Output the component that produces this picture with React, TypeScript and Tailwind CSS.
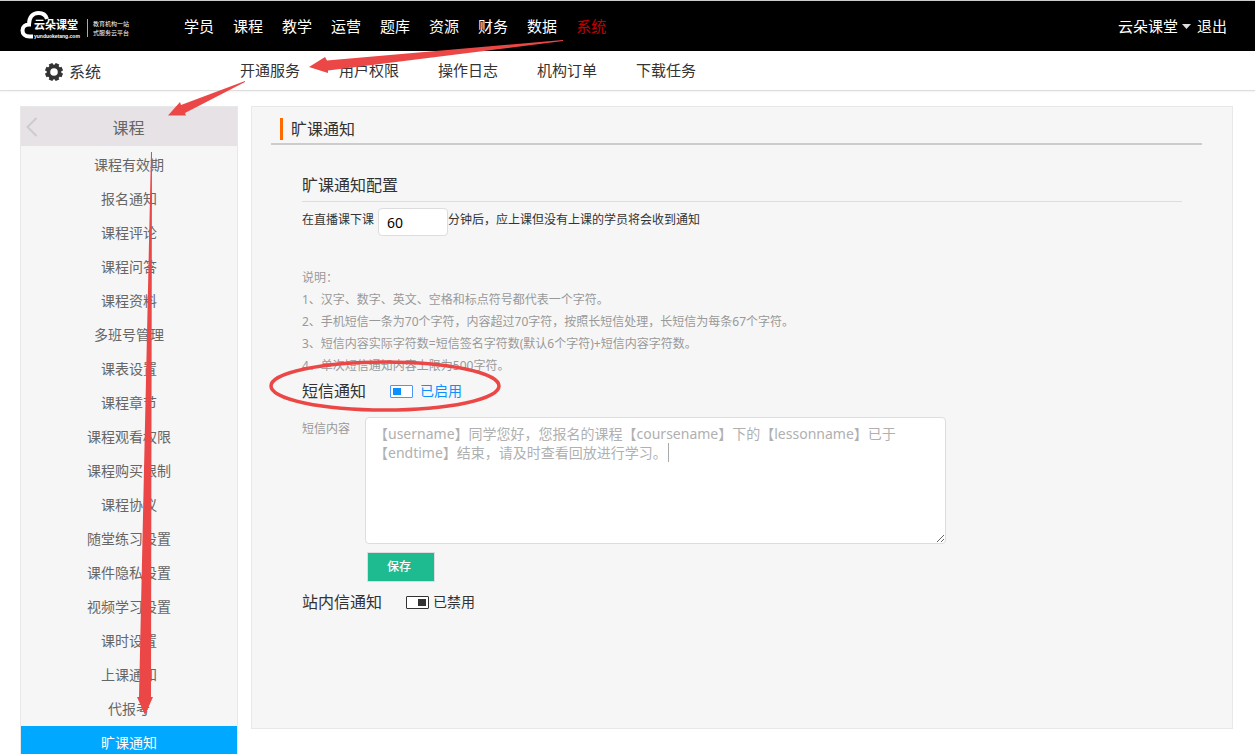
const mainNav = ['学员', '课程', '教学', '运营', '题库', '资源', '财务', '数据', '系统'];

const subNav = ['开通服务', '用户权限', '操作日志', '机构订单', '下载任务'];

const sideItems = [
  '课程有效期',
  '报名通知',
  '课程评论',
  '课程问答',
  '课程资料',
  '多班号管理',
  '课表设置',
  '课程章节',
  '课程观看权限',
  '课程购买限制',
  '课程协议',
  '随堂练习设置',
  '课件隐私设置',
  '视频学习设置',
  '课时设置',
  '上课通知',
  '代报考',
  '旷课通知',
];

const notes = [
  '说明：',
  '1、汉字、数字、英文、空格和标点符号都代表一个字符。',
  '2、手机短信一条为70个字符，内容超过70字符，按照长短信处理，长短信为每条67个字符。',
  '3、短信内容实际字符数=短信签名字符数(默认6个字符)+短信内容字符数。',
  '4、单次短信通知内容上限为500字符。',
];

function Logo() {
  return (
    <svg width="112" height="32" viewBox="0 0 112 32" className="text-white" role="img" aria-label="云朵课堂">
      <path
        d="M13 26.500H9.500C5 26.500 2.500 24 2.500 20.500c0-4 3-6 6.500-6C9 7 13 3 18.500 3c4.500 0 7.500 2.500 8.500 6"
        fill="none"
        stroke="currentColor"
        strokeWidth="4"
      />
      <text x="14" y="19" fontSize="11" fontWeight="700" fill="currentColor">云朵课堂</text>
      <text x="14" y="28" fontSize="5" fontWeight="700" fill="currentColor" className="font-['Liberation_Sans',sans-serif]">
        yunduoketang.com
      </text>
      <path d="M67.500 9v18" stroke="#aaa" />
      <text x="73" y="16" fontSize="6" fill="currentColor">教育机构一站</text>
      <text x="73" y="25" fontSize="6" fill="currentColor">式服务云平台</text>
    </svg>
  );
}

function GearIcon() {
  return (
    <svg width="18" height="18" viewBox="0 0 18 18" className="text-[#333]" aria-hidden="true">
      <circle cx="9" cy="9" r="5.600" fill="none" stroke="currentColor" strokeWidth="3.600" />
      <g stroke="currentColor" strokeWidth="4">
        <path d="M9 0v3M9 15v3M0 9h3M15 9h3" transform="rotate(22.500 9 9)" />
        <path d="M9 0v3M9 15v3M0 9h3M15 9h3" transform="rotate(67.500 9 9)" />
      </g>
    </svg>
  );
}

function TopBar() {
  return (
    <header className="flex h-[51px] items-center border-t border-[#ccc] bg-black pr-7 pl-5 text-[15px] text-white">
      <a href="#" className="mr-[52px] shrink-0">
        <Logo />
      </a>
      <nav className="flex gap-[19px]">
        {mainNav.map((name) => (
          <a key={name} href="#" className={name === '系统' ? 'text-[#c00000]' : ''}>
            {name}
          </a>
        ))}
      </nav>
      <div className="ml-auto flex items-center">
        <button type="button" className="flex items-center gap-1">
          云朵课堂
          <svg width="9" height="5" viewBox="0 0 9 5" fill="#ddd" aria-hidden="true">
            <path d="M0 0h9L4.500 5z" />
          </svg>
        </button>
        <a href="#" className="ml-1.5">退出</a>
      </div>
    </header>
  );
}

function SubBar() {
  return (
    <div className="flex h-10 items-center border-b border-[#ddd] bg-white pl-[45px] text-[15px] text-[#333] shadow-xs">
      <div className="flex w-[195px] items-center gap-1.5 pt-0.5 text-base">
        <GearIcon />
        系统
      </div>
      <nav className="flex gap-[39px]">
        {subNav.map((name) => (
          <a key={name} href="#">
            {name}
          </a>
        ))}
      </nav>
    </div>
  );
}

function Sidebar() {
  return (
    <aside className="w-[218px] shrink-0 border border-[#e8e8e8] bg-[#f6f6f6] text-center text-sm text-[#666]">
      <div className="flex h-[39px] items-center bg-[#e6e2e6] pr-[22px] pl-[5px]">
        <button type="button" aria-label="返回">
          <svg width="12" height="20" viewBox="0 0 12 20" fill="none" stroke="#ccc" strokeWidth="2">
            <path d="M10.500 1L1.500 10l9 9" />
          </svg>
        </button>
        <h2 className="flex-1 pt-0.5 pl-1 text-base">课程</h2>
      </div>
      <ul className="pt-0.5">
        {sideItems.map((item) => (
          <li key={item}>
            <a
              href="#"
              className={
                item === '旷课通知'
                  ? 'block h-[34px] bg-[#00a8ff] leading-[34px] text-white'
                  : 'block h-[34px] leading-[34px]'
              }
            >
              {item}
            </a>
          </li>
        ))}
      </ul>
    </aside>
  );
}

function NoticePanel() {
  return (
    <main className="min-h-[623px] flex-1 border border-[#e8e8e8] bg-[#f6f6f6] pr-[30px] pl-[19px] text-[#333]">
      <div className="flex h-[38px] items-end border-b-2 border-[#ccc] pb-[3px] pl-[9px]">
        <h1 className="border-l-3 border-[#ff6a00] pl-2 text-base leading-[22px]">旷课通知</h1>
      </div>

      <div className="pt-7 pr-5 pl-[31px]">
        <h2 className="h-[29px] border-b border-[#ddd] text-base leading-6">旷课通知配置</h2>
        <div className="flex items-start pt-1.5 text-xs leading-6">
          <label htmlFor="minutes" className="mr-1">在直播课下课</label>
          <input
            id="minutes"
            type="text"
            defaultValue="60"
            className="h-7 w-[70px] rounded-sm border border-[#ddd] bg-white px-2 text-sm text-black"
          />
          <span>分钟后，应上课但没有上课的学员将会收到通知</span>
        </div>

        <div className="mt-[31px] text-xs leading-[22px] text-[#999]">
          {notes.map((note) => (
            <p key={note}>{note}</p>
          ))}
        </div>

        <div className="flex h-7 items-center">
          <h3 className="w-[88px] text-base">短信通知</h3>
          <label className="flex items-center gap-[7px] text-sm text-[#0a90ff]">
            <input
              type="checkbox"
              defaultChecked
              className="h-[13px] w-[23px] appearance-none rounded-[1px] border border-[#4d94ff] bg-white p-0.5 before:block before:h-[7px] before:w-2 before:bg-[#0a90ff]"
            />
            已启用
          </label>
        </div>

        <div className="flex items-start pt-3">
          <label htmlFor="content" className="w-[63px] shrink-0 text-xs leading-6 text-[#999]">短信内容</label>
          <div className="relative w-[581px]">
            <textarea
              id="content"
              className="block h-[127px] w-full rounded-sm border border-[#ddd] bg-white px-2 py-1.5 text-sm leading-[19px] text-[#b0b0b0]"
              defaultValue="【username】同学您好，您报名的课程【coursename】下的【lessonname】已于【endtime】结束，请及时查看回放进行学习。"
            />
            <span className="absolute top-[26px] left-[303px] h-[19px] w-px bg-[#aaa]" />
          </div>
        </div>

        <button
          type="button"
          className="mt-2 ml-[65px] block h-[30px] w-[68px] border border-[#ddd] bg-[#1fbb90] pr-1 text-xs font-medium text-white"
        >
          保存
        </button>

        <div className="mt-1.5 flex h-7 items-center">
          <h3 className="w-[104px] text-base">站内信通知</h3>
          <label className="flex items-center gap-1 text-sm">
            <input
              type="checkbox"
              className="h-[13px] w-[23px] appearance-none rounded-[1px] border border-[#333] bg-white p-0.5 before:ml-auto before:block before:h-[7px] before:w-2 before:bg-[#333]"
            />
            已禁用
          </label>
        </div>
      </div>
    </main>
  );
}

// Red guide marks drawn over the page
function Annotations() {
  return (
    <svg
      width="600"
      height="754"
      viewBox="0 0 600 754"
      className="pointer-events-none absolute top-0 left-0"
      fill="#ec4747"
      aria-hidden="true"
    >
      <path d="M309 67L325 57L327 60.500L563 40V41L328 70.500V73z" />
      <path d="M168 115.500L180 102L181 105L245 81V82L185 113L186 115.500z" />
      <path d="M151 152H152L151 697H153L145 715L137 697H139z" />
      <ellipse cx="385" cy="386" rx="114" ry="24" fill="none" stroke="#ec4747" strokeWidth="3.500" />
    </svg>
  );
}

export default function App() {
  return (
    <div className="relative h-screen overflow-hidden bg-white font-['Noto_Sans','Noto_Sans_CJK_SC',sans-serif]">
      <TopBar />
      <SubBar />
      <div className="flex items-start gap-[13px] pt-[15px] pr-[22px] pl-5">
        <Sidebar />
        <NoticePanel />
      </div>
      <Annotations />
    </div>
  );
}
